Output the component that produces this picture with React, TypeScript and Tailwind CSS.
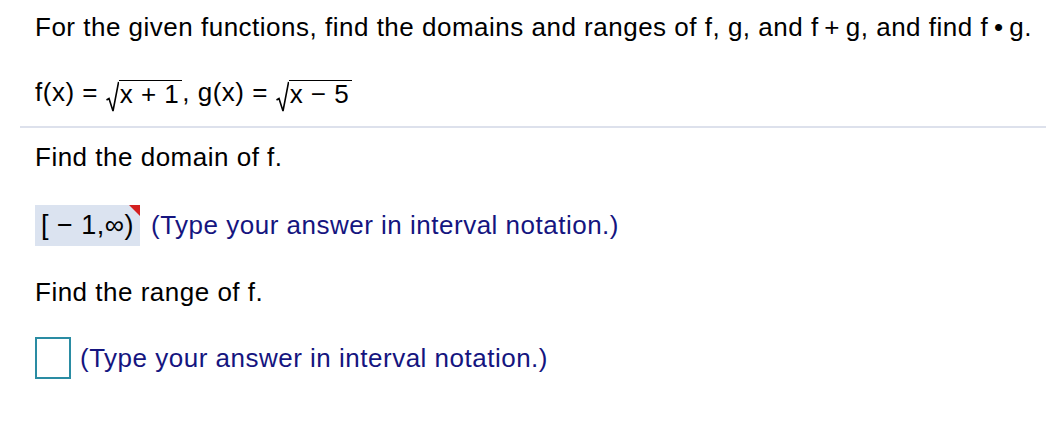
function Radical({ children }: { children: React.ReactNode }) {
  return (
    <span className="inline-flex items-stretch">
      <svg width="13" height="32" viewBox="0 0 13 32" className="self-end mb-[-6px]">
        <path d="M0.5 19 L3 17.5 L7 30 L12.6 0.8" fill="none" stroke="black" strokeWidth="1.6" />
      </svg>
      <span className="border-t-[1.6px] border-black pl-[1px] pr-[3px] leading-[26px]">{children}</span>
    </span>
  );
}

export default function App() {
  const font = { fontFamily: '"Liberation Sans", Arial, sans-serif' };
  return (
    <div className="w-[1046px] h-[435px] bg-white text-black tracking-[0.5px]" style={font}>
      <div className="pl-[35px] pt-[12px] text-[26px] leading-[30px] whitespace-nowrap">
        For the given functions, find the domains and ranges of f, g, and f{"\u2009"}+{"\u2009"}g, and find f{"\u2009"}•{"\u2009"}g.
      </div>
      <div className="pl-[35px] mt-[35px] text-[26px] leading-[30px] h-[30px] flex items-end whitespace-pre">
        <span>f(x) = </span>
        <Radical>x + 1</Radical>
        <span>, g(x) = </span>
        <Radical>x − 5</Radical>
      </div>
      <div className="ml-[20px] mt-[19px] h-[2px] bg-[#dde1ec]" />
      <div className="pl-[35px] mt-[14px] text-[26px] leading-[30px]">Find the domain of f.</div>
      <div className="pl-[35px] mt-[33px] flex items-center text-[26px] whitespace-nowrap">
        <span className="relative bg-[#dbe3f0] w-[105px] h-[41px] flex items-center justify-center text-[27px]">
          [ − 1,∞)
          <span className="absolute right-0 top-0 w-0 h-0 border-t-[11px] border-l-[11px] border-t-[#d42020] border-l-transparent" />
        </span>
        <span className="ml-[11px] text-[#15157f]">(Type your answer in interval notation.)</span>
      </div>
      <div className="pl-[35px] mt-[31px] text-[26px] leading-[30px]">Find the range of f.</div>
      <div className="pl-[35px] mt-[30px] flex items-center text-[26px] whitespace-nowrap">
        <span className="w-[36px] h-[42px] border-2 border-[#2a8ca3] bg-white" />
        <span className="ml-[9px] text-[#15157f]">(Type your answer in interval notation.)</span>
      </div>
    </div>
  );
}
